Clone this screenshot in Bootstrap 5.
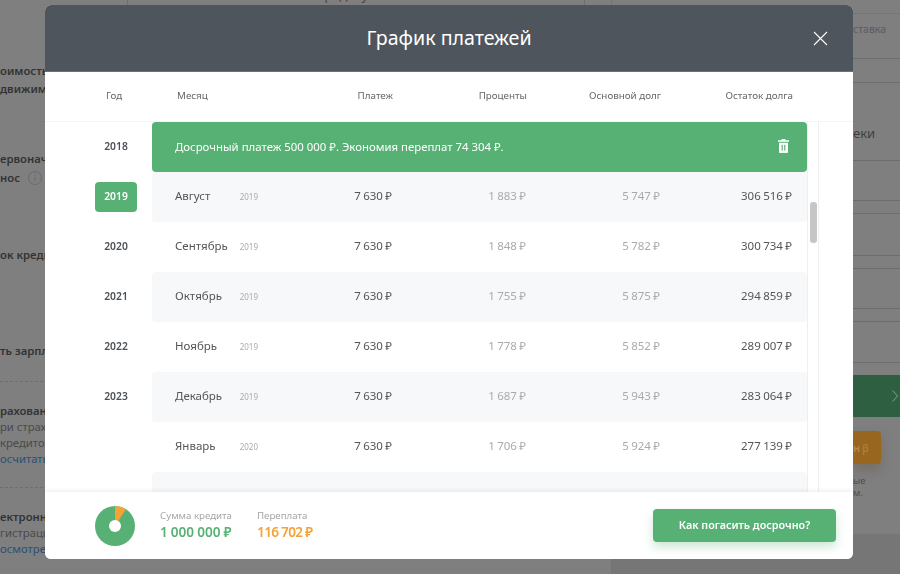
<!DOCTYPE html>
<html lang="ru">
<head>
    <meta charset="UTF-8">
    <meta name="viewport" content="width=device-width, initial-scale=1.0">
    <title>График платежей</title>
    <link href="https://cdn.jsdelivr.net/npm/bootstrap@5.3.3/dist/css/bootstrap.min.css" rel="stylesheet">
    <style>
        html, body {
            height: 100%;
            overflow: hidden;
        }

        body {
            background-color: #7f7f7f;
            font-family: 'Noto Sans', 'Open Sans', sans-serif;
            color: #555;
        }

        /* dimmed page behind the modal */
        .back-page {
            width: 900px;
            height: 574px;
            overflow: hidden;
        }

        .back-left {
            width: 611px;
            flex: none;
            font-size: 11.3px;
            white-space: nowrap;
            color: #4a4a4a;
        }

        .top-strip {
            height: 5px;
            overflow: hidden;
            align-items: flex-end;
            font-size: 13px;
            line-height: 1;
            white-space: nowrap;
        }

        .top-strip .cell-a { width: 128px; height: 5px; flex: none; border-right: 1px solid #6f6f6f; }
        .top-strip .cell-b { width: 457px; height: 5px; flex: none; overflow: hidden; border-right: 1px solid #6f6f6f; padding: 0 0 0 30px; color: #444; display: flex; align-items: flex-end; }
        .top-strip .cell-b span { padding-bottom: 3px; }
        .top-strip .cell-c { padding: 0 0 3px 28px; color: #1f6b3a; font-size: 15px; word-spacing: 3px; }
        .top-strip .cell-c span { margin-left: 46px; }

        .back-text { line-height: 16px; }
        .back-text b { color: #333; font-weight: 600; }
        .back-link { color: #2c4f72; }

        .gap-1st { margin-top: 57px; line-height: 18px; font-weight: 600; color: #333; }
        .gap-2nd { margin-top: 51px; line-height: 19px; font-weight: 600; color: #333; }
        .gap-3rd { margin-top: 59px; line-height: 18px; font-weight: 600; color: #333; }
        .gap-4th { margin-top: 78px; line-height: 18px; font-weight: 600; color: #333; }
        .gap-5th { margin-top: 21px; }
        .gap-6th { margin-top: 21px; }

        .dash-line {
            border-top: 1px dashed #6e6e6e;
            margin-top: 21px;
        }

        .dash-line.second { margin-top: 20px; }

        .back-right {
            flex: 1;
            min-width: 0;
            background-color: #767676;
            border-left: 1px solid #747474;
        }

        .right-panel {
            height: 534px;
            background-color: #7f7f7f;
        }

        .right-inner {
            padding-left: 241px;
            font-size: 10.5px;
            white-space: nowrap;
            color: #5c5c5c;
        }

        .line-row { border-bottom: 1px solid #6c6c6c; }
        .line-row.dotted { border-bottom-style: dotted; height: 9px; }
        .line-row.h45 { height: 45px; line-height: 30px; }
        .line-row.h24 { height: 24px; }
        .line-row.h78 { height: 78px; font-size: 13px; color: #3f3f3f; padding-top: 41px; line-height: 18px; }
        .line-row.h40 { height: 40px; }
        .line-row.h13 { height: 13px; }
        .line-row.h42 { height: 42px; }
        .line-row.h41 { height: 41px; }

        .go-bar {
            height: 42px;
            margin-top: 12px;
            background-color: #2e5f40;
        }

        .go-bar svg { margin-right: 2px; }

        .orange-btn {
            height: 33px;
            margin-top: 14px;
            width: 28px;
            background-color: #98661f;
            color: #b38a4a;
            border-radius: 0 4px 4px 0;
            font-size: 11px;
            font-weight: 600;
            line-height: 33px;
            box-shadow: 0 6px 12px rgba(90, 60, 20, .25);
        }

        .orange-btn span { color: #a97e3c; margin-left: 2px; }

        .note-text { margin-top: 11px; font-size: 9.5px; line-height: 12px; color: #4d4d4d; }

        /* modal */
        .pay-modal {
            position: fixed;
            left: 45px;
            top: 5px;
            width: 808px;
            height: 554px;
            background-color: #fff;
            border: 0;
            border-radius: 6px;
            overflow: hidden;
        }

        .pay-modal .modal-header {
            height: 67px;
            flex: none;
            background-color: #4e555c;
            border: 0;
            border-bottom: 1px solid #6b7176;
            border-radius: 0;
            padding: 0 25px 0 0;
        }

        .pay-modal .modal-title {
            flex: 1;
            text-align: center;
            color: #fff;
            font-size: 19.6px;
            font-weight: 400;
            padding-left: 40px;
        }

        .close-x {
            background: none;
            border: 0;
            padding: 0;
            line-height: 0;
        }

        .head-row {
            height: 50px;
            flex: none;
            font-size: 9.8px;
            color: #666;
            border-bottom: 1px solid #f3f4f5;
        }

        .year-col {
            width: 107px;
            flex: none;
        }

        .head-year { padding-left: 61px; }

        .col-month { width: 107px; flex: none; padding-left: 25px; }
        .col-sum { width: 134px; flex: none; text-align: right; }
        .col-last { width: 132px; flex: none; text-align: right; }

        .pay-body {
            flex: 1;
            min-height: 0;
            padding: 0;
            overflow: hidden;
        }

        .year-item {
            height: 50px;
            padding-left: 50px;
            font-size: 10.3px;
            font-weight: 600;
            color: #4a4f55;
        }

        .year-pill {
            width: 42px;
            height: 30px;
            border-radius: 4px;
            text-align: center;
            line-height: 28px;
        }

        .year-pill.active {
            background-color: #57b174;
            color: #fff;
        }

        .rows-col {
            width: 655px;
            flex: none;
        }

        .month-row {
            height: 50px;
            padding-bottom: 2px;
            border-radius: 4px;
            font-size: 11.5px;
            word-spacing: -.6px;
            color: #555;
        }

        .month-row.shade { background-color: #f6f8fa; }

        .month-row .col-sum, .month-row .col-last { padding-right: 1px; }

        .month-cell {
            width: 107px;
            flex: none;
            padding-left: 23px;
            padding-right: 1px;
            justify-content: space-between;
        }

        .month-cell small {
            font-size: 8px;
            color: #aaa;
            padding-top: 2px;
        }

        .muted-sum { color: #aaa; }

        .early-row {
            height: 50px;
            background-color: #57b174;
            border-radius: 4px;
            color: #fff;
            font-size: 11.4px;
            padding: 0 18px 0 23px;
        }

        .early-row svg { margin-bottom: 3px; }

        .scroll-track {
            width: 12px;
            flex: none;
            border-left: 1px solid #eeeff0;
            border-right: 1px solid #eeeff0;
            padding: 80px 1px 0 2px;
        }

        .scroll-thumb {
            height: 41px;
            border-radius: 3px;
            background-color: #c6c6c6;
        }

        .pay-modal .modal-footer {
            height: 67px;
            flex: none;
            padding: 0 17px 0 50px;
            border: 0;
            border-radius: 0;
            box-shadow: 0 -2px 4px rgba(0, 0, 0, .06);
            background-color: #fff;
            justify-content: flex-start;
            position: relative;
        }

        .pay-modal .modal-footer > * { margin: 0; }

        .foot-label {
            font-size: 9.7px;
            color: #a6a6a6;
            line-height: 14px;
            margin-top: -2px;
        }

        .foot-value {
            font-size: 13.6px;
            font-weight: 600;
            line-height: 18px;
        }

        .sum-green { color: #57b174; word-spacing: -.5px; }
        .sum-orange { color: #f5a236; letter-spacing: -.6px; word-spacing: -.5px; }

        .foot-credit { margin-left: 25px !important; width: 97px; }

        .how-btn {
            width: 183px;
            height: 33px;
            padding: 0;
            font-size: 10.8px;
            font-weight: 600;
            color: #fff;
            background-color: #57b174;
            border: 0;
            border-radius: 4px;
            box-shadow: 0 5px 10px rgba(87, 177, 116, .3);
        }
    </style>
</head>
<body>
    <div class="back-page d-flex">
        <div class="back-left">
            <div class="top-strip d-flex">
                <div class="cell-a"></div>
                <div class="cell-b"><span>Ежемесячный платёж по кредиту</span></div>
            </div>
            <div class="gap-1st">оимость<br>движим</div>
            <div class="gap-2nd">ервонача<br>
                <span class="d-inline-flex align-items-center gap-2">нос
                    <svg width="14" height="14" viewBox="0 0 14 14" fill="none" stroke="#6b6b6b"><circle cx="7" cy="7" r="6.5"/><path d="M7 6v4M7 3.8v1"/></svg>
                </span>
            </div>
            <div class="gap-3rd">ок креди</div>
            <div class="gap-4th">ть зарпл</div>
            <div class="dash-line"></div>
            <div class="back-text gap-5th">
                <b>рахован</b><br>ри страхо<br>кредито<br><span class="back-link">осчитать</span>
            </div>
            <div class="dash-line second"></div>
            <div class="back-text gap-6th">
                <b>ектронн</b><br>гистраци<br><span class="back-link">осмотрет</span>
            </div>
        </div>
        <div class="back-right">
            <div class="right-panel">
                <div class="top-strip d-flex">
                    <div class="cell-c">1 000 000 ₽<span>15 047 ₽</span></div>
                </div>
                <div class="right-inner">
                    <div class="line-row dotted"></div>
                    <div class="line-row h45">ставка</div>
                    <div class="line-row h24"></div>
                    <div class="line-row h78">еки</div>
                    <div class="line-row h40"></div>
                    <div class="line-row h13"></div>
                    <div class="line-row h42"></div>
                    <div class="line-row h13"></div>
                    <div class="line-row h40"></div>
                    <div class="line-row h13"></div>
                    <div class="line-row h41"></div>
                    <div class="go-bar d-flex align-items-center justify-content-end">
                        <svg width="6" height="12" viewBox="0 0 6 12" fill="none" stroke="#8a9c90" stroke-width="1"><path d="M.5.5l5 5.500-5 5.500"/></svg>
                    </div>
                    <div class="orange-btn">н<span>β</span></div>
                    <div class="note-text">ые<br>м.</div>
                </div>
            </div>
        </div>
    </div>

    <div class="modal-content pay-modal d-flex flex-column">
        <div class="modal-header">
            <h5 class="modal-title">График платежей</h5>
            <button class="close-x" type="button" aria-label="Закрыть">
                <svg width="15" height="15" viewBox="0 0 15 15" fill="none" stroke="#fff" stroke-width="1.1"><path d="M1 1l13 13M14 1L1 14"/></svg>
            </button>
        </div>

        <div class="head-row d-flex align-items-center">
            <div class="year-col head-year">Год</div>
            <div class="col-month">Месяц</div>
            <div class="col-sum">Платеж</div>
            <div class="col-sum">Проценты</div>
            <div class="col-sum">Основной долг</div>
            <div class="col-last">Остаток долга</div>
        </div>

        <div class="modal-body pay-body d-flex">
            <div class="year-col">
                <div class="year-item d-flex align-items-center"><div class="year-pill">2018</div></div>
                <div class="year-item d-flex align-items-center"><div class="year-pill active">2019</div></div>
                <div class="year-item d-flex align-items-center"><div class="year-pill">2020</div></div>
                <div class="year-item d-flex align-items-center"><div class="year-pill">2021</div></div>
                <div class="year-item d-flex align-items-center"><div class="year-pill">2022</div></div>
                <div class="year-item d-flex align-items-center"><div class="year-pill">2023</div></div>
            </div>
            <div class="rows-col" id="rows">
                <div class="early-row d-flex align-items-center justify-content-between">
                    <span>Досрочный платеж 500 000 ₽. Экономия переплат 74 304 ₽.</span>
                    <svg width="11" height="14" viewBox="0 0 11 14" fill="#fff"><path d="M3.800 0h3.400l.5 1.200H11v1.600H0V1.200h3.300zM1 3.800h9V13a1 1 0 0 1-1 1H2a1 1 0 0 1-1-1zm2.600 2v5.600h1.200V5.800zm2.600 0v5.600h1.200V5.800z" fill-rule="evenodd"/></svg>
                </div>
            </div>
            <div class="scroll-track"><div class="scroll-thumb"></div></div>
        </div>

        <div class="modal-footer d-flex align-items-center">
            <svg width="40" height="40" viewBox="0 0 40 40">
                <circle cx="20" cy="20" r="20" fill="#57b174"/>
                <path d="M20 20V0A20 20 0 0 1 30.900 3.200z" fill="#f5a236"/>
                <circle cx="20" cy="20" r="6" fill="#fff"/>
            </svg>
            <div class="foot-credit">
                <div class="foot-label">Сумма кредита</div>
                <div class="foot-value sum-green">1 000 000 ₽</div>
            </div>
            <div>
                <div class="foot-label">Переплата</div>
                <div class="foot-value sum-orange">116 702 ₽</div>
            </div>
            <button class="btn how-btn ms-auto" type="button">Как погасить досрочно?</button>
        </div>
    </div>

    <script>
        const data = [
            ['Август', '2019', '1 883', '5 747', '306 516'],
            ['Сентябрь', '2019', '1 848', '5 782', '300 734'],
            ['Октябрь', '2019', '1 755', '5 875', '294 859'],
            ['Ноябрь', '2019', '1 778', '5 852', '289 007'],
            ['Декабрь', '2019', '1 687', '5 943', '283 064'],
            ['Январь', '2020', '1 706', '5 924', '277 139'],
            ['Февраль', '2020', '1 695', '5 935', '271 204']
        ];
        const rows = document.getElementById('rows');
        data.forEach((d, i) => {
            const row = document.createElement('div');
            row.className = 'month-row d-flex align-items-center' + (i % 2 === 0 ? ' shade' : '');
            row.innerHTML =
                '<div class="month-cell d-flex align-items-center"><span>' + d[0] + '</span><small>' + d[1] + '</small></div>' +
                '<div class="col-sum">7 630 ₽</div>' +
                '<div class="col-sum muted-sum">' + d[2] + ' ₽</div>' +
                '<div class="col-sum muted-sum">' + d[3] + ' ₽</div>' +
                '<div class="col-last">' + d[4] + ' ₽</div>';
            rows.appendChild(row);
        });
    </script>
    <script src="https://cdn.jsdelivr.net/npm/bootstrap@5.3.3/dist/js/bootstrap.bundle.min.js"></script>
</body>
</html>
